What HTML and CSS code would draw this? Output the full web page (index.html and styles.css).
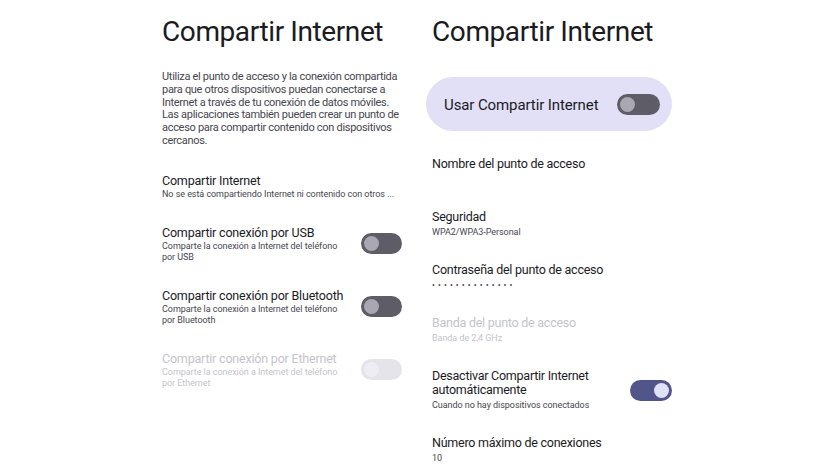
FILE: index.html
```html
<!DOCTYPE html>
<html lang="es">
<head>
<meta charset="utf-8">
<title>Compartir Internet</title>
<link rel="stylesheet" href="styles.css">
</head>
<body>
<div class="page">
  <section class="col left">
    <h1 class="title">Compartir Internet</h1>
    <p class="desc">Utiliza el punto de acceso y la conexión compartida para que otros dispositivos puedan conectarse a Internet a través de tu conexión de datos móviles. Las aplicaciones también pueden crear un punto de acceso para compartir contenido con dispositivos cercanos.</p>
    <div class="litem">
      <div class="ltext">
        <div class="ltitle">Compartir Internet</div>
        <div class="lsub nowrap">No se está compartiendo Internet ni contenido con otros ...</div>
      </div>
    </div>
    <div class="litem">
      <div class="ltext">
        <div class="ltitle">Compartir conexión por USB</div>
        <div class="lsub">Comparte la conexión a Internet del teléfono por USB</div>
      </div>
      <span class="toggle off"><span class="thumb"></span></span>
    </div>
    <div class="litem">
      <div class="ltext">
        <div class="ltitle">Compartir conexión por Bluetooth</div>
        <div class="lsub">Comparte la conexión a Internet del teléfono por Bluetooth</div>
      </div>
      <span class="toggle off"><span class="thumb"></span></span>
    </div>
    <div class="litem disabled">
      <div class="ltext">
        <div class="ltitle">Compartir conexión por Ethernet</div>
        <div class="lsub">Comparte la conexión a Internet del teléfono por Ethernet</div>
      </div>
      <span class="toggle dis"><span class="thumb"></span></span>
    </div>
  </section>
  <section class="col right">
    <h1 class="title">Compartir Internet</h1>
    <div class="pill">
      <span class="pill-label">Usar Compartir Internet</span>
      <span class="toggle off"><span class="thumb"></span></span>
    </div>
    <div class="ritem">
      <div class="rtext">
        <div class="rtitle">Nombre del punto de acceso</div>
        <div class="rsub">&nbsp;</div>
      </div>
    </div>
    <div class="ritem">
      <div class="rtext">
        <div class="rtitle">Seguridad</div>
        <div class="rsub">WPA2/WPA3-Personal</div>
      </div>
    </div>
    <div class="ritem">
      <div class="rtext">
        <div class="rtitle">Contraseña del punto de acceso</div>
        <div class="rsub dots">••••••••••••••</div>
      </div>
    </div>
    <div class="ritem disabled">
      <div class="rtext">
        <div class="rtitle">Banda del punto de acceso</div>
        <div class="rsub">Banda de 2,4 GHz</div>
      </div>
    </div>
    <div class="ritem">
      <div class="rtext">
        <div class="rtitle">Desactivar Compartir Internet automáticamente</div>
        <div class="rsub">Cuando no hay dispositivos conectados</div>
      </div>
      <span class="toggle on"><span class="thumb"></span></span>
    </div>
    <div class="ritem">
      <div class="rtext">
        <div class="rtitle">Número máximo de conexiones</div>
        <div class="rsub">10</div>
      </div>
    </div>
  </section>
</div>
</body>
</html>
```
FILE: styles.css
```css
* { box-sizing: border-box; }
html, body {
  margin: 0;
  padding: 0;
  background: #ffffff;
}
body {
  font-family: Roboto, "Noto Sans", "Liberation Sans", sans-serif;
  color: #1c1b1f;
  width: 828px;
  height: 466px;
  overflow: hidden;
}
.page {
  display: flex;
  gap: 24px;
  padding-left: 162px;
}
.col.left { width: 240px; }
.col.right { width: 246px; }
.title {
  margin: 14px 0 0 0;
  font-size: 28px;
  line-height: 36px;
  font-weight: 400;
  color: #1b1b1f;
  letter-spacing: -0.4px;
  white-space: nowrap;
}
.right .title { margin-left: 6px; }
.desc {
  margin: 21px 0 0 0;
  font-size: 11px;
  line-height: 12.8px;
  color: #46464f;
  letter-spacing: -0.3px;
}
.litem {
  display: flex;
  align-items: center;
  margin-top: 25px;
}
.ltext { flex: 1; min-width: 0; }
.ltitle {
  font-size: 12.5px;
  line-height: 15px;
  color: #1b1b1f;
  letter-spacing: -0.2px;
}
.lsub {
  margin-top: 1px;
  font-size: 9px;
  line-height: 11px;
  color: #46464f;
  max-width: 186px;
  letter-spacing: -0.05px;
}
.lsub.nowrap { max-width: none; white-space: nowrap; }
.litem.disabled .ltitle,
.litem.disabled .lsub,
.ritem.disabled .rtitle,
.ritem.disabled .rsub { color: #c4c4cb; }

.toggle {
  position: relative;
  flex: none;
  width: 41px;
  height: 21px;
  border-radius: 11px;
  background: #5d5c67;
}
.toggle .thumb {
  position: absolute;
  top: 3px;
  left: 3px;
  width: 15px;
  height: 15px;
  border-radius: 50%;
  background: #a8a7b2;
}
.toggle.dis { background: #e5e4ea; }
.toggle.dis .thumb { background: #eeedf3; }
.toggle.on { background: #515589; width: 42px; }
.toggle.on .thumb {
  left: auto;
  right: 3px;
  background: #e2e1fa;
}

.pill {
  margin-top: 27px;
  height: 54px;
  border-radius: 27px;
  background: #e1e0f7;
  display: flex;
  align-items: center;
  justify-content: space-between;
  padding: 1px 12px 0 18px;
}
.pill-label {
  font-size: 15px;
  color: #1b1b1f;
  letter-spacing: -0.1px;
}
.pill .toggle { width: 43px; }

.ritem {
  display: flex;
  align-items: center;
  padding-left: 6px;
  margin-top: 25px;
}
.pill + .ritem { margin-top: 26px; }
.rtext { flex: 1; min-width: 0; }
.rtitle {
  font-size: 12.5px;
  line-height: 14px;
  color: #1b1b1f;
  max-width: 180px;
  letter-spacing: -0.25px;
}
.rsub {
  margin-top: 2px;
  font-size: 9px;
  line-height: 12px;
  color: #46464f;
  letter-spacing: -0.05px;
}
.rsub.dots {
  font-size: 8.5px;
  letter-spacing: 3.1px;
  color: #46464f;
}
```
